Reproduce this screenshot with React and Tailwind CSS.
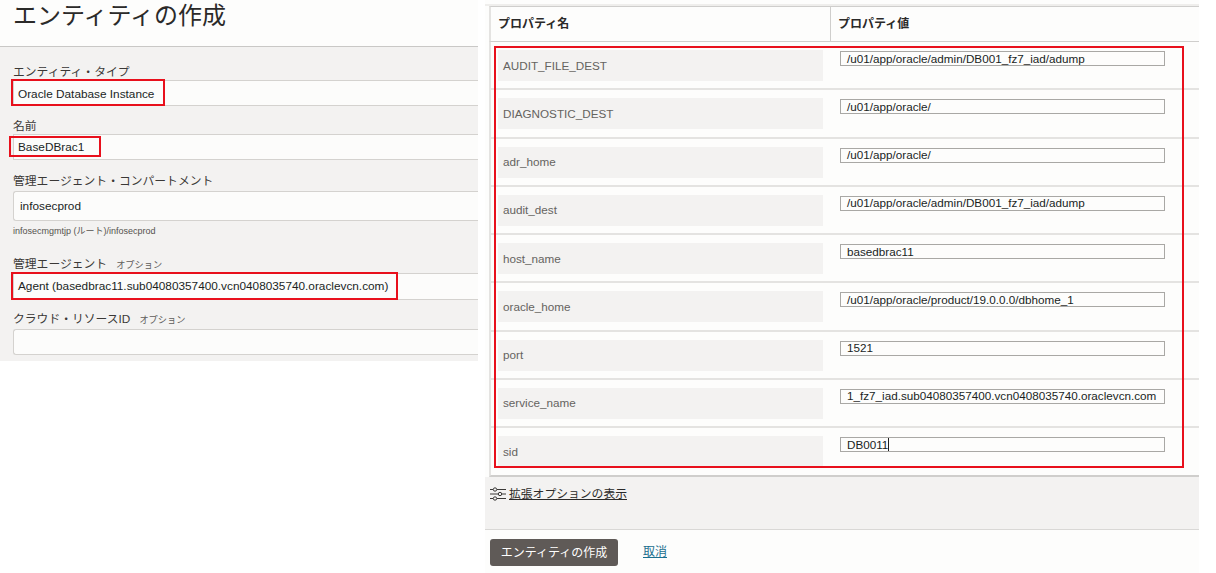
import React from 'react'

const JP = "font-['Liberation_Sans','Noto_Sans_CJK_JP',sans-serif]"

const ROWS = [
  { name: 'AUDIT_FILE_DEST', value: '/u01/app/oracle/admin/DB001_fz7_iad/adump' },
  { name: 'DIAGNOSTIC_DEST', value: '/u01/app/oracle/' },
  { name: 'adr_home', value: '/u01/app/oracle/' },
  { name: 'audit_dest', value: '/u01/app/oracle/admin/DB001_fz7_iad/adump' },
  { name: 'host_name', value: 'basedbrac11' },
  { name: 'oracle_home', value: '/u01/app/oracle/product/19.0.0.0/dbhome_1' },
  { name: 'port', value: '1521' },
  { name: 'service_name', value: '1_fz7_iad.sub04080357400.vcn0408035740.oraclevcn.com' },
  { name: 'sid', value: 'DB0011', caret: true },
]

function Label({ text, option, className = '' }) {
  return (
    <div className={`flex items-baseline gap-[9px] pl-[13px] text-[11.8px] leading-[16px] text-[#3a3836] ${className}`}>
      <span>{text}</span>
      {option && <span className="text-[9.2px] text-[#5f5d5b]">オプション</span>}
    </div>
  )
}

function Field({ value, red, rounded, className = '' }) {
  return (
    <div className={`relative ml-[13px] flex items-center bg-[#fcfcfb] border-y border-l border-[#d4d2cf] text-[#201f1e] ${rounded ? 'rounded-l-[3px]' : ''} ${className}`}>
      <span className="pl-[4px] text-[11.8px]">{value}</span>
      {red && <div className={`absolute border-2 border-[#e8101c] ${red}`} />}
    </div>
  )
}

function Row({ row, last }) {
  return (
    <div className={`flex h-[48.25px] pl-[7px] ${last ? '' : 'border-b-2 border-[#e4e3e1]'}`}>
      <div className="mt-[8px] flex h-[31px] w-[325px] items-center bg-[#f3f2f1] pl-[5px] text-[11.7px] text-[#65635f]">
        {row.name}
      </div>
      <div className="ml-[17px] mt-[9px] flex h-[15px] w-[325px] items-center border border-[#a9a8a5] bg-[#fdfdfc] pl-[6px] text-[11.7px] text-[#201f1e] whitespace-nowrap overflow-hidden">
        {row.value}
        {row.caret && <span className="h-[13px] w-px bg-[#201f1e]" />}
      </div>
    </div>
  )
}

export default function App() {
  return (
    <div className={`flex h-[573px] w-[1216px] overflow-hidden bg-white ${JP}`}>
      {/* left form */}
      <div className="w-[478px] shrink-0">
        <div className="h-[47px] border-b border-[#c9c8c6] bg-[#fdfdfc] pl-[13px] pt-[1px] text-[24px] leading-[30px] text-[#2b2a29]">
          エンティティの作成
        </div>
        <div className="h-[314px] overflow-hidden bg-[#f3f2f1]">
          <Label text="エンティティ・タイプ" className="mt-[17px]" />
          <Field value="Oracle Database Instance" className="h-[26px] pt-[3px]" red="-left-[3px] -top-[2px] -bottom-[1px] w-[154px]" />
          <Label text="名前" className="mt-[12px]" />
          <Field value="BaseDBrac1" className="h-[26px] pt-[2px]" red="-left-[5px] top-[1px] bottom-[2px] w-[92px]" />
          <Label text="管理エージェント・コンパートメント" className="mt-[13px]" />
          <Field value="infosecprod" className="mt-[2px] h-[30px] pl-[2px] pt-[1px]" rounded />
          <div className="mt-[3px] pl-[13px] text-[9px] leading-[14px] text-[#55534f]">infosecmgmtjp (ルート)/infosecprod</div>
          <Label text="管理エージェント" option className="mt-[18px]" />
          <Field value="Agent (basedbrac11.sub04080357400.vcn0408035740.oraclevcn.com)" className="h-[27px]" red="-left-[3px] -top-[2px] -bottom-[1px] w-[387px]" />
          <Label text="クラウド・リソースID" option className="mt-[11px]" />
          <Field value="" className="mt-[1px] h-[26px]" rounded />
        </div>
      </div>

      {/* right table */}
      <div className="ml-[7px] flex h-[573px] w-[714px] shrink-0 flex-col bg-[#fdfdfc]">
        <div className="h-[4px]" />
        <div className="h-[2px] bg-[#efeeec]" />
        <div className="ml-[4px] flex h-[36px] items-center border-y border-l-2 border-y-[#cfcecc] border-l-[#e4e3e1] text-[12px] font-bold text-[#2b2a29]">
          <div className="flex h-full w-[340px] items-center border-r border-[#cfcecc] pl-[7px]">プロパティ名</div>
          <div className="pl-[7px]">プロパティ値</div>
        </div>
        <div className="relative ml-[4px] h-[435px] border-b-2 border-l-2 border-b-[#cfcecc] border-l-[#e4e3e1]">
          {ROWS.map((r, i) => <Row key={r.name} row={r} last={i === ROWS.length - 1} />)}
          <div className="absolute left-[3px] top-[4px] h-[422px] w-[690px] border-2 border-[#e8101c]" />
        </div>
        <div className="h-[53px] border-b border-[#d9d8d6] bg-[#f3f2f1] pt-[8px]">
          <div className="flex items-center gap-[3px] pl-[5px] text-[11.8px] leading-[18px] text-[#2b2a29]">
            <svg width="16" height="14" viewBox="0 0 16 14" fill="none" stroke="#3a3836" strokeWidth="1">
              <path d="M0 2.5h3M7 2.5h9M0 7h8M12 7h4M0 11.5h3M7 11.5h9" />
              <circle cx="5" cy="2.5" r="1.7" />
              <circle cx="10" cy="7" r="1.7" />
              <circle cx="5" cy="11.5" r="1.7" />
            </svg>
            <span className="underline">拡張オプションの表示</span>
          </div>
        </div>
        <div className="flex items-center pl-[5px] pt-[9px]">
          <button className="h-[27px] w-[128px] rounded-[3px] bg-[#5f5a57] text-[12px] text-white">エンティティの作成</button>
          <a className="mb-[2px] ml-[25px] text-[12px] text-[#1b6f8f] underline">取消</a>
        </div>
      </div>
    </div>
  )
}
